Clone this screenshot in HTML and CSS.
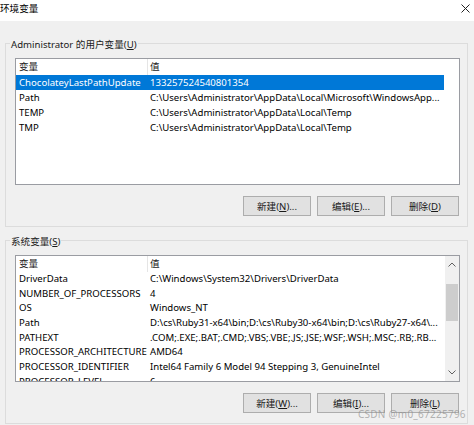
FILE: index.html
```html
<!DOCTYPE html>
<html lang="zh-CN">
<head>
<meta charset="utf-8">
<title>环境变量</title>
<link rel="stylesheet" href="styles.css">
</head>
<body>
<div class="window">
  <div class="titlebar">
    <span class="title">环境变量</span>
    <span class="close"><svg width="9" height="9" viewBox="0 0 9 9"><path d="M0.5 0.5L8.5 8.5M8.5 0.5L0.5 8.5" stroke="#222" stroke-width="1" fill="none"/></svg></span>
  </div>
  <div class="body">
    <section class="group">
      <div class="group-title">Administrator 的用户变量(<u>U</u>)</div>
      <div class="list">
        <div class="cols">
          <div class="row head"><div class="c1">变量</div><div class="c2">值</div></div>
          <div class="row sel"><div class="c1">ChocolateyLastPathUpdate</div><div class="c2">133257524540801354</div></div>
          <div class="row"><div class="c1">Path</div><div class="c2">C:\Users\Administrator\AppData\Local\Microsoft\WindowsApp...</div></div>
          <div class="row"><div class="c1">TEMP</div><div class="c2">C:\Users\Administrator\AppData\Local\Temp</div></div>
          <div class="row"><div class="c1">TMP</div><div class="c2">C:\Users\Administrator\AppData\Local\Temp</div></div>
        </div>
      </div>
      <div class="buttons">
        <div class="btn">新建(<u>N</u>)...</div>
        <div class="btn">编辑(<u>E</u>)...</div>
        <div class="btn">删除(<u>D</u>)</div>
      </div>
    </section>
    <section class="group">
      <div class="group-title">系统变量(<u>S</u>)</div>
      <div class="list">
        <div class="cols dense">
          <div class="row head"><div class="c1">变量</div><div class="c2">值</div></div>
          <div class="row"><div class="c1">DriverData</div><div class="c2">C:\Windows\System32\Drivers\DriverData</div></div>
          <div class="row"><div class="c1">NUMBER_OF_PROCESSORS</div><div class="c2">4</div></div>
          <div class="row"><div class="c1">OS</div><div class="c2">Windows_NT</div></div>
          <div class="row"><div class="c1">Path</div><div class="c2">D:\cs\Ruby31-x64\bin;D:\cs\Ruby30-x64\bin;D:\cs\Ruby27-x64\...</div></div>
          <div class="row"><div class="c1">PATHEXT</div><div class="c2">.COM;.EXE;.BAT;.CMD;.VBS;.VBE;.JS;.JSE;.WSF;.WSH;.MSC;.RB;.RB...</div></div>
          <div class="row"><div class="c1">PROCESSOR_ARCHITECTURE</div><div class="c2">AMD64</div></div>
          <div class="row"><div class="c1">PROCESSOR_IDENTIFIER</div><div class="c2">Intel64 Family 6 Model 94 Stepping 3, GenuineIntel</div></div>
          <div class="row"><div class="c1">PROCESSOR_LEVEL</div><div class="c2">6</div></div>
        </div>
        <div class="scrollbar">
          <div class="arrow"><svg width="8" height="5" viewBox="0 0 8 5"><path d="M0.5 4.5L4 1L7.5 4.5" stroke="#606060" fill="none"/></svg></div>
          <div class="track"><div class="thumb"></div></div>
          <div class="arrow"><svg width="8" height="5" viewBox="0 0 8 5"><path d="M0.5 0.5L4 4L7.5 0.5" stroke="#606060" fill="none"/></svg></div>
        </div>
      </div>
      <div class="buttons">
        <div class="btn">新建(<u>W</u>)...</div>
        <div class="btn">编辑(<u>I</u>)...</div>
        <div class="btn">删除(<u>L</u>)</div>
      </div>
    </section>
  </div>
  <div class="watermark">CSDN @m0_67225796</div>
</div>
</body>
</html>
```

FILE: styles.css
```css
html, body {
  margin: 0;
  padding: 0;
}
body {
  background: #f0f0f0;
  font-family: "Noto Sans", "Noto Sans CJK SC", sans-serif;
  font-size: 9.6px;
  color: #000;
}
.window {
  width: 474px;
  height: 425px;
  position: relative;
  overflow: hidden;
}
.titlebar {
  height: 21px;
  background: #fff;
  display: flex;
  align-items: center;
  justify-content: space-between;
}
.title {
  font-size: 9.6px;
  line-height: 14px;
  margin-top: -3px;
  color: #000;
}
.close {
  display: flex;
  margin-right: 4px;
  margin-top: -4px;
}
.body {
  padding: 22px 6px 0 5px;
  display: flex;
  flex-direction: column;
  gap: 13px;
}
.group {
  border: 1px solid #dcdcdc;
  padding: 0 7px 10px 9px;
}
.group-title {
  margin: -6px 0 0 -5px;
  width: fit-content;
  background: #f0f0f0;
  padding: 0 1px;
  height: 14px;
  line-height: 14px;
  white-space: nowrap;
  color: #1a1a1a;
}
.list {
  margin-top: 6px;
  height: 127px;
  box-sizing: border-box;
  border: 1px solid #9a9ca2;
  background: #fff;
  overflow: hidden;
  display: flex;
}
.cols {
  flex: 1;
  overflow: hidden;
}
.row {
  display: flex;
  width: 428px;
  height: 15px;
  line-height: 15px;
  white-space: nowrap;
}
.dense .row {
  height: 14.7px;
  line-height: 14.7px;
}
.row.head,
.dense .row.head {
  height: 16px;
  line-height: 16px;
  color: #1a1a1a;
}
.row.head .c1 {
  border-right: 1px solid #e5e5e5;
}
.row.sel {
  background: #0078d7;
  color: #fff;
}
.c1 {
  width: 132px;
  flex: none;
  box-sizing: border-box;
  padding-left: 3px;
  overflow: hidden;
}
.c2 {
  flex: 1;
  padding-left: 2px;
  overflow: hidden;
}
.scrollbar {
  width: 14px;
  flex: none;
  background: #f0f0f0;
  display: flex;
  flex-direction: column;
}
.arrow {
  height: 17px;
  display: flex;
  align-items: center;
  justify-content: center;
}
.track {
  flex: 1;
  padding-top: 11px;
}
.thumb {
  height: 37px;
  margin: 0 1px;
  background: #cdcdcd;
}
.buttons {
  display: flex;
  justify-content: flex-end;
  gap: 6px;
  margin-top: 11px;
  padding-right: 1px;
}
.btn {
  width: 68px;
  height: 20px;
  box-sizing: border-box;
  border: 1px solid #adadad;
  background: #e1e1e1;
  display: flex;
  align-items: center;
  justify-content: center;
  font-size: 9.6px;
  color: #1a1a1a;
}
.watermark {
  position: absolute;
  left: 358px;
  top: 407px;
  font-size: 10px;
  letter-spacing: 0.25px;
  color: rgba(140, 140, 140, 0.65);
  white-space: nowrap;
}
```
